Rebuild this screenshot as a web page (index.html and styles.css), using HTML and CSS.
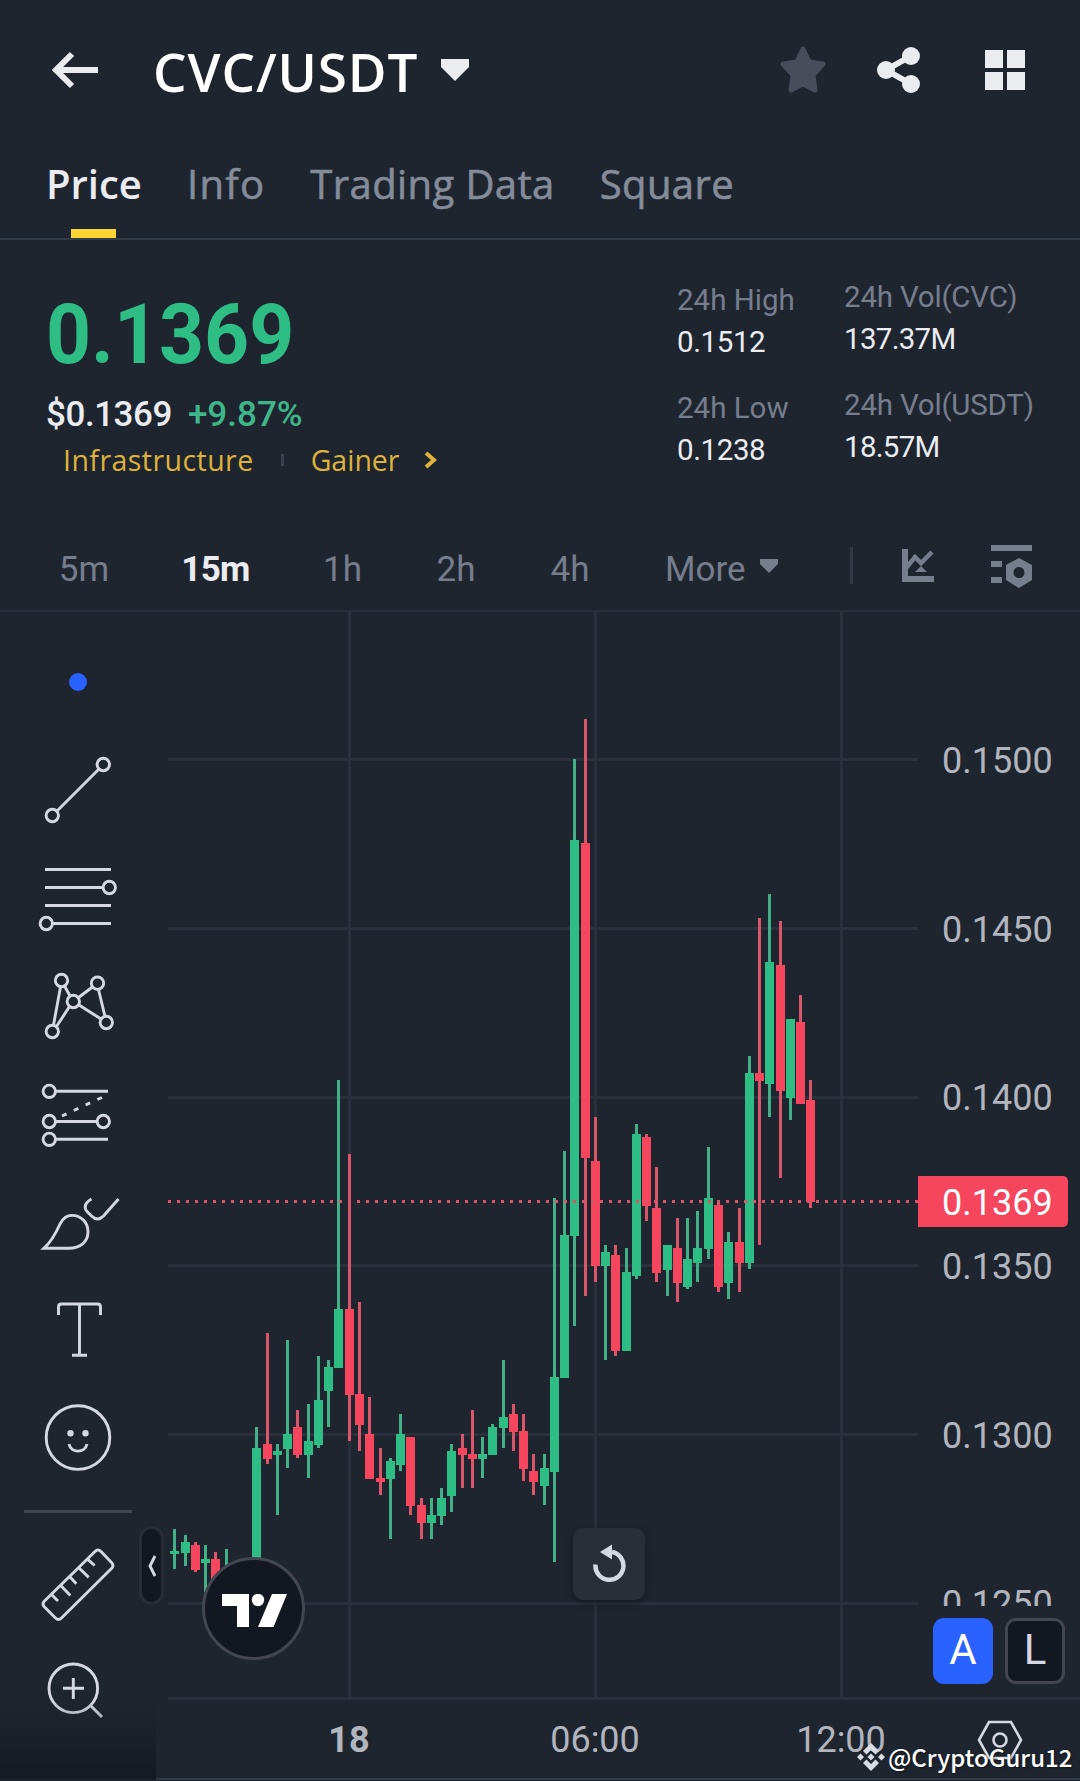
FILE: index.html
```html
<!DOCTYPE html>
<html lang="en">
<head>
  <meta charset="UTF-8" />
  <title>CVC/USDT</title>
  <meta name="viewport" content="width=device-width, initial-scale=1.0" />
  <link rel="stylesheet" href="styles.css">
</head>

<body>
  <header class="header">
    <svg class="back" width="46" height="38" viewBox="0 0 46 38"><path d="M46 19H5M20 3L4 19l16 16" fill="none" stroke="#eaecef" stroke-width="6"/></svg>
    <h1>CVC/USDT</h1>
    <svg class="caret" width="28" height="22" viewBox="0 0 28 22"><path d="M0 0h28v8L14 22 0 8z" fill="#eaecef"/></svg>
    <div class="actions">
      <svg width="46" height="48" viewBox="0 0 46 48"><path d="M23 3l6 13 14 2-10 11 2 15-12-6-12 6 2-15L3 18l14-2z" fill="#474d5a" stroke="#474d5a" stroke-width="5" stroke-linejoin="round"/></svg>
      <svg width="44" height="48" viewBox="0 0 44 48"><path d="M34 10L9 24l25 14" fill="none" stroke="#eaecef" stroke-width="6"/><circle cx="34" cy="10" r="9" fill="#eaecef"/><circle cx="9" cy="24" r="9" fill="#eaecef"/><circle cx="34" cy="38" r="9" fill="#eaecef"/></svg>
      <svg width="40" height="40" viewBox="0 0 40 40"><path d="M0 0h18v18H0zM22 0h18v18H22zM0 22h18v18H0zM22 22h18v18H22z" fill="#eaecef"/></svg>
    </div>
  </header>

  <nav class="tabs">
    <a class="tab active">Price</a>
    <a class="tab info">Info</a>
    <a class="tab">Trading Data</a>
    <a class="tab">Square</a>
  </nav>

  <section class="quote">
    <div class="last">
      <div class="price">0.1369</div>
      <div class="change"><span>$0.1369</span><span class="up">+9.87%</span></div>
      <div class="tags">
        <span class="sector">Infrastructure</span>
        <i class="tag-line"></i>
        <span>Gainer</span>
        <svg width="15" height="18" viewBox="0 0 15 18"><path d="M3 2l8 7-8 7" fill="none" stroke="#ddb23c" stroke-width="4"/></svg>
      </div>
    </div>
    <dl class="stats">
      <dt>24h High</dt><dd>0.1512</dd>
      <dt>24h Low</dt><dd>0.1238</dd>
    </dl>
    <dl class="stats volume">
      <dt>24h Vol(CVC)</dt><dd>137.37M</dd>
      <dt>24h Vol(USDT)</dt><dd>18.57M</dd>
    </dl>
  </section>

  <div class="periods">
    <span>5m</span>
    <span class="active">15m</span>
    <span>1h</span>
    <span>2h</span>
    <span>4h</span>
    <span class="more">More <svg width="18" height="14" viewBox="0 0 18 14"><path d="M0 0h18v5l-9 9-9-9z" fill="#767d8c"/></svg></span>
    <i class="period-line"></i>
    <svg class="indicator" width="32" height="33" viewBox="0 0 32 33"><path d="M3 0v30h29" fill="none" stroke="#767d8c" stroke-width="6"/><path d="M4 19l9-11 6 6L30 3" fill="none" stroke="#767d8c" stroke-width="4.5"/><path d="M19 17l6 6H13z" fill="#767d8c"/></svg>
    <svg width="41" height="44" viewBox="0 0 41 44"><path d="M0 1h41v6H0zM0 17h11v6H0zM0 33h11v6H0z" fill="#767d8c"/><path d="M28 14l13 7v15l-13 8-13-8V21zm0 9a5.500 5.500 0 100 11 5.500 5.500 0 000-11z" fill="#767d8c" fill-rule="evenodd"/></svg>
  </div>

  <main class="chart">
    <aside class="tools">
      <span class="dot"></span>
      <svg viewBox="0 0 168 108"><path d="M57 75L98.500 33.500"/><circle cx="52.300" cy="79.500" r="6.200"/><circle cx="103.300" cy="28.500" r="6.200"/></svg>
      <svg viewBox="0 0 168 108"><path d="M45 25.500h66M45 43.500h58M45 61.500h66M52 79.500h59"/><circle cx="109.300" cy="43.500" r="6.200"/><circle cx="46.300" cy="79.500" r="6.200"/></svg>
      <svg viewBox="0 0 168 108"><path d="M60.500 35L53.500 73M64.500 34l5.500 10M78.500 45.500l14-10.500M98.500 37.500l6.500 27M79 53l22 14M69.500 54.500L56.500 74.500"/><circle cx="61.500" cy="28.500" r="6.200"/><circle cx="97.500" cy="31.200" r="6.200"/><circle cx="73.300" cy="49.500" r="6.200"/><circle cx="106.300" cy="70.500" r="6.200"/><circle cx="52.300" cy="79.500" r="6.200"/></svg>
      <svg viewBox="0 0 168 108"><path d="M56 31.300h52M56 61.500h41M56 79.300h52"/><path d="M62 56l43-20" stroke-dasharray="5 8"/><circle cx="49.300" cy="31.300" r="6.200"/><circle cx="49.300" cy="61.500" r="6.200"/><circle cx="103.300" cy="61.500" r="6.200"/><circle cx="49.300" cy="79.300" r="6.200"/></svg>
      <svg viewBox="0 0 168 108"><path d="M44 80.200C51 74 56 65 60 56c3-6 7-8.600 12-8.600 9 0 16 7 16 16.600 0 10-8 16-19 16.200zM91.500 31c-7 4-8 9-4 13l4 4c4 4 8 4 12 0l15-17"/></svg>
      <svg viewBox="0 0 168 108"><path d="M58.500 39v-8q0-3 3-3h36q3 0 3 3v8M79.500 28v51M72 79.200h15"/></svg>
      <svg viewBox="0 0 168 108"><circle cx="78" cy="53.600" r="31.800"/><path d="M69 60c2 9.500 16 9.500 18 0"/><g class="solid"><circle cx="70.500" cy="49.300" r="3.200"/><circle cx="85.500" cy="49.300" r="3.200"/></g></svg>
      <hr>
      <svg viewBox="0 0 168 108"><path d="M95 20.500q3-3 6 0l10.500 11q3 3 0 6L61.500 87q-3 3-6 0L44.500 76q-3-3 0-6zM51.700 63.800L58 70M61 54.700l9.300 9.900M70 46l6.300 6.800M79.300 37.300l9.400 9.100M88 28.600l6.700 5.900"/></svg>
      <svg viewBox="0 0 168 108"><circle cx="73.300" cy="49.300" r="24.300"/><path d="M63 49.300h21M73.300 39v21M91 67l11 11"/></svg>
      <div class="tools-fade"></div>
      <button class="collapse"><svg viewBox="0 0 8 22"><path d="M7 1L2 11l5 10"/></svg></button>
    </aside>

    <div class="plot">
      <svg id="candles" width="750" height="1088" viewBox="168 611 750 1088"></svg>
      <div class="tv-logo"><svg width="66" height="34" viewBox="0 0 66 34"><path d="M0 0h27v33H15V12H0zM50 0h15L51.500 33H36z" fill="#fff"/><circle cx="36" cy="6" r="6.200" fill="#fff"/></svg></div>
      <button class="reset"><svg width="34" height="40" viewBox="0 0 34 40"><path d="M3.500 20.500A14 14 0 1 0 20 8" fill="none" stroke="#d5d8e2" stroke-width="4.500"/><path d="M8 8L20 .500v15z" fill="#d5d8e2"/></svg></button>
    </div>

    <div class="price-axis">
      <div class="prices">
        <span>0.1500</span><span>0.1450</span><span>0.1400</span><span>0.1350</span><span>0.1300</span><span>0.1250</span>
      </div>
      <div class="current">0.1369</div>
      <div class="scales"><button class="auto">A</button><button class="log">L</button></div>
    </div>

    <div class="time-axis">
      <span class="day">18</span><span>06:00</span><span>12:00</span>
      <svg class="settings" width="46" height="40" viewBox="0 0 46 40"><path d="M12 2h22l10 18-10 18H12L2 20z" fill="none" stroke="#d5d8e2" stroke-width="2.600"/><circle cx="23" cy="20" r="6.500" fill="none" stroke="#d5d8e2" stroke-width="2.600"/></svg>
    </div>
    <div class="handle">
      <svg width="28" height="28" viewBox="0 0 28 28"><path d="M14 0l8 8-3.500 3.500L14 7l-4.500 4.500L6 8zM14 28l8-8-3.500-3.500L14 21l-4.500-4.500L6 20zM14 10.500l3.500 3.500-3.500 3.500-3.500-3.500zM3.500 10.500L7 14l-3.500 3.500L0 14zM24.500 10.500L28 14l-3.500 3.500L21 14z" fill="#d9dce4"/></svg>
      @CryptoGuru12
    </div>
  </main>

  <script>
    // x, direction, high, body top, body bottom, low
    const candles = [
      [174, 'g', 1529, 1551, 1554, 1569], [185, 'g', 1535, 1542, 1553, 1566],
      [195, 'r', 1542, 1545, 1570, 1572], [205, 'g', 1545, 1559, 1563, 1592],
      [215, 'r', 1552, 1559, 1590, 1600], [226, 'g', 1549, 1570, 1590, 1600],
      [256, 'g', 1427, 1448, 1600, 1600], [267, 'r', 1333, 1444, 1459, 1464],
      [277, 'g', 1444, 1451, 1455, 1515], [287, 'g', 1340, 1434, 1449, 1468],
      [297, 'r', 1410, 1427, 1455, 1458], [308, 'g', 1404, 1441, 1455, 1478],
      [318, 'g', 1356, 1400, 1445, 1448], [328, 'g', 1360, 1367, 1391, 1427],
      [338, 'g', 1080, 1309, 1368, 1368], [349, 'r', 1154, 1309, 1395, 1441],
      [359, 'r', 1302, 1394, 1425, 1451], [369, 'r', 1397, 1434, 1479, 1479],
      [380, 'r', 1448, 1478, 1482, 1495], [390, 'g', 1458, 1461, 1479, 1539],
      [400, 'g', 1414, 1434, 1465, 1471], [410, 'r', 1437, 1437, 1506, 1515],
      [421, 'r', 1498, 1505, 1523, 1539], [431, 'g', 1498, 1515, 1523, 1539],
      [441, 'g', 1488, 1498, 1516, 1525], [451, 'g', 1444, 1451, 1496, 1512],
      [462, 'r', 1434, 1448, 1455, 1488], [472, 'r', 1410, 1454, 1459, 1488],
      [482, 'g', 1437, 1454, 1459, 1478], [492, 'g', 1424, 1427, 1455, 1455],
      [503, 'g', 1360, 1417, 1428, 1448], [513, 'r', 1404, 1414, 1432, 1451],
      [523, 'r', 1414, 1431, 1469, 1481], [533, 'r', 1454, 1471, 1482, 1495],
      [544, 'g', 1454, 1468, 1486, 1505], [554, 'g', 1198, 1377, 1472, 1562],
      [564, 'g', 1151, 1235, 1378, 1378], [574, 'g', 759, 840, 1236, 1326],
      [585, 'r', 719, 843, 1158, 1296], [595, 'r', 1117, 1161, 1266, 1282],
      [605, 'g', 1245, 1252, 1266, 1360], [615, 'r', 1245, 1255, 1351, 1356],
      [626, 'g', 1248, 1272, 1351, 1351], [636, 'g', 1124, 1134, 1276, 1279],
      [646, 'r', 1134, 1137, 1206, 1221], [656, 'r', 1167, 1208, 1273, 1282],
      [667, 'g', 1245, 1245, 1270, 1296], [677, 'r', 1218, 1248, 1283, 1302],
      [687, 'g', 1218, 1259, 1287, 1289], [697, 'g', 1211, 1248, 1263, 1282],
      [708, 'g', 1147, 1198, 1249, 1259], [718, 'r', 1202, 1205, 1287, 1292],
      [728, 'g', 1232, 1242, 1283, 1299], [739, 'r', 1208, 1242, 1263, 1292],
      [749, 'g', 1056, 1073, 1263, 1269], [759, 'r', 918, 1073, 1081, 1245],
      [769, 'g', 894, 962, 1084, 1117], [780, 'r', 921, 965, 1091, 1178],
      [790, 'g', 1019, 1019, 1098, 1120], [800, 'r', 995, 1022, 1104, 1104],
      [810, 'r', 1080, 1100, 1202, 1208]
    ];
    const colors = { g: ['#2ebd85', '#43b088'], r: ['#f6465d', '#d9566a'] };

    function rect(x, y, w, h, fill) {
      return `<rect x="${x}" y="${y}" width="${w}" height="${h}" fill="${fill}"/>`;
    }

    let out = '';
    [758, 927, 1096, 1264, 1433, 1602].forEach(y => out += rect(168, y, 750, 3, '#29303b'));
    [348, 594, 840].forEach(x => out += rect(x, 611, 3, 1086, '#29303b'));
    candles.forEach(([x, dir, high, top, bottom, low]) => {
      out += rect(x - 1, high, 3, low - high, colors[dir][1]);
      out += rect(x - 4, top, 9, bottom - top, colors[dir][0]);
    });
    out += '<path d="M168 1201.500h750" stroke="#d9566a" stroke-width="3" stroke-dasharray="3 6"/>';
    document.getElementById('candles').innerHTML = out;
  </script>
</body>
</html>
```

FILE: styles.css
```css
* {
  box-sizing: border-box;
}

body {
  margin: 0;
  width: 1080px;
  height: 1781px;
  overflow: hidden;
  background: #1f252f;
  color: #eaecef;
  font-family: Roboto, "Liberation Sans", sans-serif;
}

svg {
  display: block;
  flex-shrink: 0;
}

button {
  border: none;
  padding: 0;
  font-family: inherit;
}

.header {
  display: flex;
  align-items: center;
  height: 140px;
  padding: 0 55px 0 52px;
}

h1 {
  margin: 2px 0 0 55px;
  width: 288px;
  font-family: "Open Sans", sans-serif;
  font-size: 53px;
  font-weight: 600;
  letter-spacing: 0.9px;
  color: #fff;
}

.actions {
  display: flex;
  align-items: center;
  margin-left: auto;
}

.actions svg:nth-child(2) {
  margin: 0 64px 0 51px;
}

.tabs {
  display: flex;
  gap: 45px;
  height: 100px;
  padding-left: 46px;
  border-bottom: 2px solid #333b47;
}

.tab {
  position: relative;
  line-height: 88px;
  font-family: "Open Sans", sans-serif;
  font-size: 40px;
  letter-spacing: 0.4px;
  color: #848b99;
  -webkit-text-stroke: 0.6px #848b99;
}

.tab.info {
  letter-spacing: 1.3px;
}

.tab.active {
  color: #eaecef;
  font-weight: 600;
  letter-spacing: 0;
  -webkit-text-stroke: 0;
}

.tab.active::after {
  content: "";
  position: absolute;
  left: 25px;
  bottom: 0;
  width: 45px;
  height: 9px;
  background: #fcd535;
}

.quote {
  display: flex;
  height: 280px;
}

.last {
  width: 677px;
  padding: 50px 0 0 46px;
}

.price {
  font-size: 83px;
  font-weight: 700;
  line-height: 90px;
  color: #2ebd85;
  transform: scaleX(0.947);
  transform-origin: left;
}

.change {
  display: flex;
  gap: 16px;
  font-size: 35px;
  font-weight: 500;
  line-height: 69px;
  letter-spacing: -0.45px;
}

.change .up {
  color: #3fb68a;
  letter-spacing: 0;
}

.tags {
  display: flex;
  align-items: center;
  padding-left: 17px;
  line-height: 22px;
  font-family: "Open Sans", sans-serif;
  font-size: 28.5px;
  color: #ddb23c;
}

.sector {
  letter-spacing: 0.45px;
}

.tag-line {
  width: 3px;
  height: 12px;
  margin: 0 27px;
  background: #3a414e;
}

.tags svg {
  margin-left: 23px;
}

.stats {
  width: 167px;
  margin: 0;
  padding-top: 39px;
  font-size: 29.5px;
  line-height: 42px;
  white-space: nowrap;
}

.stats.volume {
  padding-top: 36px;
}

.stats dt {
  color: #767d8c;
}

.stats dd {
  margin: 0 0 24px;
  letter-spacing: -0.4px;
}

.volume dt {
  letter-spacing: -0.2px;
}

.stats.volume dd {
  letter-spacing: -0.7px;
}

.periods {
  display: flex;
  align-items: center;
  height: 91px;
  padding: 8px 0 0 24px;
  font-size: 35px;
  color: #767d8c;
}

.periods > span {
  width: 120px;
  text-align: center;
}

.periods > span:nth-child(2) { width: 143px; }
.periods > span:nth-child(3) { width: 111px; }
.periods > span:nth-child(4) { width: 116px; }
.periods > span:nth-child(5) { width: 112px; }

.periods .active {
  color: #eaecef;
  font-weight: 700;
  letter-spacing: -0.7px;
}

.periods > .more {
  display: flex;
  align-items: center;
  justify-content: space-between;
  width: 113px;
  margin-left: 39px;
}

.more svg {
  margin-top: -8px;
}

.period-line {
  width: 3px;
  height: 37px;
  margin: -8px 49px 0 72px;
  background: #333a46;
}

.periods > svg {
  margin-top: -8px;
}

.indicator {
  margin-right: 57px;
}

/* chart */
.chart {
  position: relative;
  display: grid;
  grid-template: 1088px 80px / 168px 750px 162px;
  height: 1170px;
  border-top: 2px solid #272e39;
  border-bottom: 2px solid #333b47;
  margin-top: -1px;
}

.tools {
  position: relative;
  grid-row: 1 / 3;
  overflow: hidden;
}

.tools > svg {
  width: 168px;
  height: 108px;
}

.tools svg {
  fill: none;
  stroke: #d5d8e2;
  stroke-width: 2.9px;
}

.tools .solid {
  fill: #d5d8e2;
  stroke: none;
}

.dot {
  display: block;
  width: 18px;
  height: 18px;
  margin: 61px 0 45px 69px;
  border-radius: 50%;
  background: #2962ff;
}

.tools hr {
  width: 108px;
  height: 3px;
  margin: 18px 0 18px 24px;
  border: none;
  background: #434651;
}

.tools-fade {
  position: absolute;
  left: 0;
  bottom: 0;
  width: 156px;
  height: 80px;
  background: linear-gradient(rgba(19, 23, 34, 0), rgba(19, 23, 34, 0.85));
}

.collapse {
  position: absolute;
  left: 139px;
  top: 914px;
  width: 25px;
  height: 79px;
  border: 3px solid #282c37;
  border-radius: 13px;
  background: #131722;
}

.collapse svg {
  width: 8px;
  height: 22px;
  margin: auto;
}

.plot {
  position: relative;
  border-bottom: 3px solid #29303b;
}

#candles {
  margin-top: -1px;
}

.tv-logo {
  position: absolute;
  left: 34px;
  top: 945px;
  width: 103px;
  height: 103px;
  padding: 34px 0 0 17px;
  border: 3px solid #434651;
  border-radius: 50%;
  background: #131722;
}

.reset {
  position: absolute;
  left: 405px;
  top: 916px;
  width: 72px;
  height: 72px;
  padding: 0 0 0 19px;
  border-radius: 10px;
  background: #292e39;
  box-shadow: 0 3px 8px rgba(0, 0, 0, 0.35);
}

.price-axis {
  position: relative;
  border-bottom: 3px solid #29303b;
  font-size: 36px;
  color: #b2b5be;
}

.prices {
  display: flex;
  flex-direction: column;
  height: 994px;
  padding-top: 65px;
  overflow: hidden;
}

.prices span {
  flex: none;
  height: 168.7px;
  padding-left: 24px;
  line-height: 168.7px;
}

.current {
  position: absolute;
  left: 0;
  top: 564px;
  width: 150px;
  height: 51px;
  padding-left: 24px;
  border-radius: 0 5px 5px 0;
  line-height: 54px;
  background: #f6465d;
  color: #fff;
}

.scales {
  display: flex;
  gap: 12px;
  padding: 12px 0 0 15px;
}

.scales button {
  width: 60px;
  height: 66px;
  padding-bottom: 3px;
  border-radius: 11px;
  font-size: 42px;
}

.scales .auto {
  background: #2962ff;
  color: #fff;
}

.scales .log {
  border: 3px solid #434651;
  background: #131722;
  color: #d5d8e2;
}

.time-axis {
  grid-column: 2 / 4;
  display: flex;
  font-size: 36px;
  line-height: 80px;
  color: #b2b5be;
}

.time-axis span {
  width: 246px;
  text-align: center;
}

.time-axis .day {
  margin-left: 58px;
  font-weight: 700;
}

.settings {
  margin: 20px 0 0 13px;
}

/* watermark */
.handle {
  position: absolute;
  left: 857px;
  top: 1128px;
  display: flex;
  align-items: center;
  gap: 3px;
  height: 36px;
  padding-bottom: 2px;
  font-family: "Noto Sans CJK SC", sans-serif;
  font-size: 24px;
  font-weight: 500;
  line-height: 30px;
  color: #fff;
  text-shadow: 1px 1px 2px rgba(0, 0, 0, 0.5);
}
```
